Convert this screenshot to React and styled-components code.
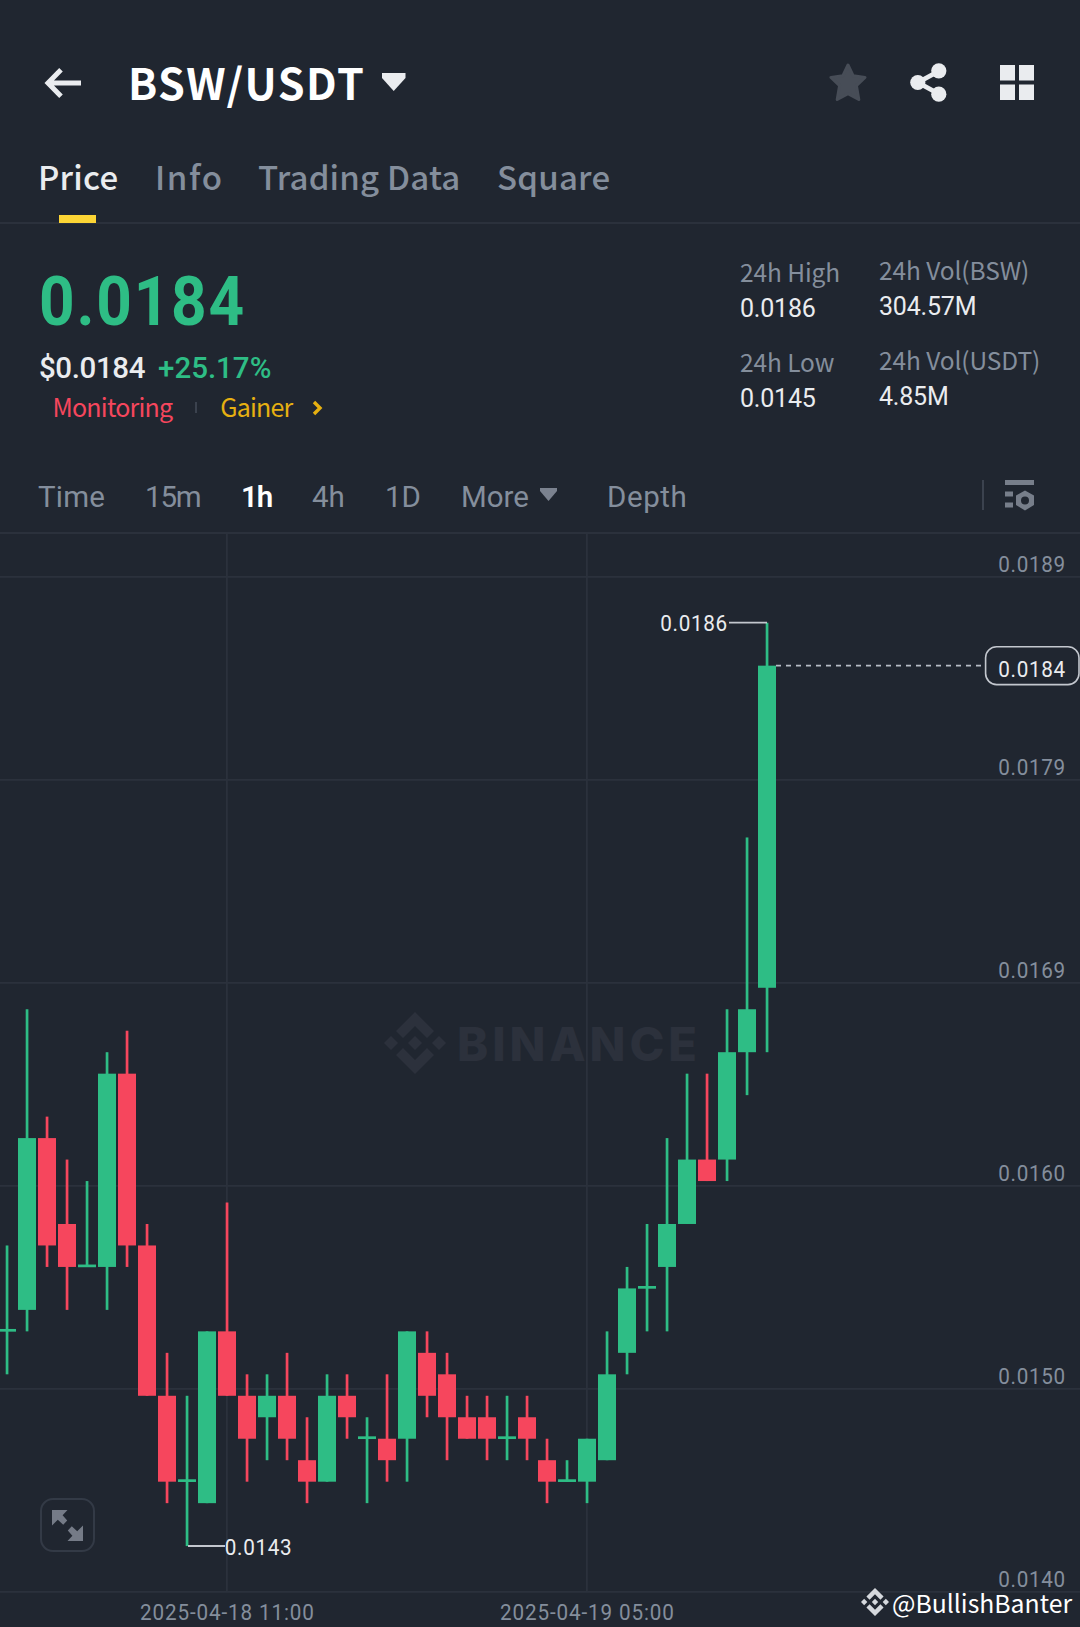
import styled, { createGlobalStyle } from "styled-components"

const tabs = [
    { name: "Price", width: 80, spacing: 0.2, active: true },
    { name: "Info", width: 66, spacing: 1.6 },
    { name: "Trading Data", width: 202, spacing: 0.2 },
    { name: "Square", width: 120, spacing: 0.2 },
]

const intervals = [
    { name: "Time", width: 107, spacing: 0.2 },
    { name: "15m", width: 96, spacing: -1.2 },
    { name: "1h", width: 71, spacing: -1, active: true },
    { name: "4h", width: 73 },
    { name: "1D", width: 76 },
    { name: "More", width: 146, menu: true },
    { name: "Depth", width: 90, spacing: 0.6 },
]

// [open, high, low, close] in ticks of 0.0001
const candles = [
    [153, 157, 151, 153], [154, 168, 153, 162], [162, 163, 156, 157], [158, 161, 154, 156],
    [156, 160, 156, 156], [156, 166, 154, 165], [165, 167, 156, 157], [157, 158, 150, 150],
    [150, 152, 145, 146], [146, 150, 143, 146], [145, 153, 145, 153], [153, 159, 150, 150],
    [150, 151, 146, 148], [149, 151, 147, 150], [150, 152, 147, 148], [147, 149, 145, 146],
    [146, 151, 146, 150], [150, 151, 148, 149], [148, 149, 145, 148], [148, 151, 146, 147],
    [148, 153, 146, 153], [152, 153, 149, 150], [151, 152, 147, 149], [149, 150, 148, 148],
    [149, 150, 147, 148], [148, 150, 147, 148], [149, 150, 147, 148], [147, 148, 145, 146],
    [146, 147, 146, 146], [146, 148, 145, 148], [147, 153, 147, 151], [152, 156, 151, 155],
    [155, 158, 153, 155], [156, 162, 153, 158], [158, 165, 158, 161], [161, 165, 160, 160],
    [161, 168, 160, 166], [166, 176, 164, 168], [169, 186, 166, 184],
]

const priceLines = [
    { label: "0.0189", y: 577 },
    { label: "0.0179", y: 780 },
    { label: "0.0169", y: 983 },
    { label: "0.0160", y: 1186 },
    { label: "0.0150", y: 1389 },
    { label: "0.0140", y: 1592 },
]

const dates = [
    { label: "2025-04-18 11:00", x: 227 },
    { label: "2025-04-19 05:00", x: 587 },
]

const priceY = (ticks) => 1546.1 - (ticks - 143) * 21.474

const Candle = ({ data, index }) => {
    const [open, high, low, close] = data
    const color = close >= open ? "#2ebd85" : "#f6465d"
    const x = 7 + index * 20
    const top = priceY(Math.max(open, close))
    const height = Math.abs(open - close) * 21.474
    return (
        <g fill={color}>
            <rect x={x - 1.3} y={priceY(high)} width="2.7" height={priceY(low) - priceY(high)} />
            {height === 0
                ? <rect x={x - 9} y={top - 2.4} width="18" height="2.7" />
                : <rect x={x - 9} y={top} width="18" height={height} />}
        </g>
    )
}

const BinanceMark = ({ size, color }) => (
    <svg width={size} height={size} viewBox="0 0 62 62" fill={color}>
        <path d="M31 0 50 19 43 26 31 14 19 26 12 19Z" />
        <path d="M31 62 50 43 43 36 31 48 19 36 12 43Z" />
        <path d="M7 24 14 31 7 38 0 31Z" />
        <path d="M55 24 62 31 55 38 48 31Z" />
        <path d="M31 24 38 31 31 38 24 31Z" />
    </svg>
)

const Chart = () => (
    <ChartSvg viewBox="0 534 1080 1093">
        {priceLines.map(line => (
            <rect key={line.label} x="0" y={line.y - 1} width="1080" height="1.8" fill="#2b313c" />
        ))}
        {dates.map(date => (
            <rect key={date.label} x={date.x - 1} y="534" width="1.8" height="1058" fill="#2b313c" />
        ))}

        <g transform="translate(384 1012)">
            <BinanceMark size={62} color="#2c313c" />
        </g>
        <Watermark x="457" y="1060.5" textLength="240">BINANCE</Watermark>

        {candles.map((c, i) => <Candle key={i} data={c} index={i} />)}

        <path d="M729 622.7H767M188 1546H225" stroke="#c3c7ce" strokeWidth="1.8" />
        <path d="M776 665.7H982" stroke="#b7bdc6" strokeWidth="1.8" strokeDasharray="5 5" />
        <Mark transform="translate(660.3 631) scale(0.94 1)" textLength="71">0.0186</Mark>
        <Mark transform="translate(224.8 1555) scale(0.94 1)" textLength="71">0.0143</Mark>

        {priceLines.map(line => (
            <AxisText key={line.label} transform={`translate(998.3 ${line.y - 5.5}) scale(0.94 1)`} textLength="71">{line.label}</AxisText>
        ))}
        {dates.map(date => (
            <AxisText key={date.label} transform={`translate(${date.x - 87} 1620.3) scale(0.94 1)`} textLength="185">{date.label}</AxisText>
        ))}

        <rect x="985.6" y="646.8" width="93.4" height="37.8" rx="11" fill="#202630" stroke="#c3c7ce" strokeWidth="1.6" />
        <Mark transform="translate(998.3 677) scale(0.94 1)" textLength="71">0.0184</Mark>
    </ChartSvg>
)

const App = () => {
    return (
        <Container>
            <GlobalStyle />

            <Header>
                <Back width="38" height="30" viewBox="0 0 38 30" fill="none" stroke="#eaecef" strokeWidth="5">
                    <path d="M37 15H4M17 1.8 4 15 17 28.2" />
                </Back>
                <Pair>BSW/USDT</Pair>
                <PairCaret width="24" height="18" viewBox="0 0 24 18" fill="#eaecef">
                    <path d="M0 0H23.5V5L11.7 18 0 5Z" />
                </PairCaret>
                <Actions>
                    <svg width="38" height="39" viewBox="0 0 38 39" fill="#474d57" stroke="#474d57" strokeWidth="3" strokeLinejoin="round">
                        <path d="M19 2 24.2 12.8 36 14.4 27.4 22.6 29.8 36.5 19 30.6 8.2 36.5 10.6 22.6 2 14.4 13.8 12.8Z" />
                    </svg>
                    <svg width="37" height="39" viewBox="0 0 37 39" fill="#eaecef">
                        <path d="M29 8 8 19.5 29 31" fill="none" stroke="#eaecef" strokeWidth="4.8" />
                        <circle cx="28.8" cy="7.8" r="7.6" />
                        <circle cx="7.8" cy="19.5" r="7.6" />
                        <circle cx="28.8" cy="31.2" r="7.6" />
                    </svg>
                    <svg width="34" height="35" viewBox="0 0 34 35" fill="#eaecef">
                        <path d="M0 0H15V15.5H0ZM19 0H34V15.5H19ZM0 19.5H15V35H0ZM19 19.5H34V35H19Z" />
                    </svg>
                </Actions>
            </Header>

            <Tabs>
                {tabs.map(tab => (
                    <Tab key={tab.name} w={tab.width} gap={tab.spacing} active={tab.active ? 1 : 0}>{tab.name}</Tab>
                ))}
            </Tabs>

            <Summary>
                <Left>
                    <Price>0.0184</Price>
                    <Change>
                        <Fiat>$0.0184</Fiat>
                        <Percent>+25.17%</Percent>
                    </Change>
                    <Tags>
                        <Tag color="#f6465d">Monitoring</Tag>
                        <TagDivider />
                        <Tag color="#e6b011">Gainer</Tag>
                        <svg width="12" height="16" viewBox="0 0 12 16" fill="none" stroke="#e6b011" strokeWidth="3.4">
                            <path d="M2 2 8 8 2 14" />
                        </svg>
                    </Tags>
                </Left>
                <Right>
                    <StatColumn w={139}>
                        <Stat><Label>24h High</Label><Value>0.0186</Value></Stat>
                        <Stat><Label>24h Low</Label><Value>0.0145</Value></Stat>
                    </StatColumn>
                    <StatColumn w={201} raised>
                        <Stat><Label>24h Vol(BSW)</Label><Value>304.57M</Value></Stat>
                        <Stat><Label>24h Vol(USDT)</Label><Value>4.85M</Value></Stat>
                    </StatColumn>
                </Right>
            </Summary>

            <Toolbar>
                {intervals.map(item => (
                    <Interval key={item.name} w={item.width} gap={item.spacing} active={item.active ? 1 : 0}>
                        {item.name}
                        {item.menu && (
                            <svg width="17" height="13" viewBox="0 0 17 13" fill="#7b828f">
                                <path d="M0 0H17V3L8.5 13 0 3Z" />
                            </svg>
                        )}
                    </Interval>
                ))}
                <Settings>
                    <svg width="30" height="31" viewBox="0 0 30 31" fill="#777e8a">
                        <path d="M0 0H29V5H0ZM0 11.5H8V16.5H0ZM0 22.5H8V27.5H0Z" />
                        <path fillRule="evenodd" d="M20 10.5 29 15.6V25L20 30.5 11 25V15.6ZM20 16.5A4 4 0 1 0 20 24.5 4 4 0 1 0 20 16.5Z" />
                    </svg>
                </Settings>
            </Toolbar>

            <ChartArea>
                <Chart />
                <Expand>
                    <svg width="31" height="31" viewBox="0 0 31 31" fill="#757b87">
                        <path d="M0 0H15.5L10.6 5.3 15.2 10.6 11.2 14.8 5.8 9.8 0 15.5Z" />
                        <path d="M31 31H15.5L20.4 25.7 15.8 20.4 19.8 16.2 25.2 21.2 31 15.5Z" />
                    </svg>
                </Expand>
                <Author>
                    <BinanceMark size={28} color="#d5d8dd" />
                    @BullishBanter
                </Author>
            </ChartArea>
        </Container>
    )
}

// ///// Style //////
const GlobalStyle = createGlobalStyle`
    * { box-sizing: border-box; }
    body {
        margin: 0;
        background-color: #202630;
    }
`
const Container = styled.div`
    width: 1080px;
    height: 1627px;
    overflow: hidden;
    display: flex;
    flex-direction: column;
    background-color: #202630;
    color: #eaecef;
    font-family: "Noto Sans CJK SC", "Noto Sans", sans-serif;
    white-space: nowrap;
`
// Header
const Header = styled.div`
    height: 118px;
    padding: 47px 46px 0 44px;
    display: flex;
    align-items: center;
`
const Back = styled.svg`
    flex: none;
`
const Pair = styled.h1`
    margin: -4px 0 0;
    width: 300px;
    padding-left: 46px;
    font-size: 43px;
    font-weight: 600;
    line-height: 60px;
    letter-spacing: 1.5px;
    color: #fff;
`
const PairCaret = styled.svg`
    flex: none;
    margin-bottom: 1px;
`
const Actions = styled.div`
    margin-left: auto;
    display: flex;
    align-items: center;
    gap: 43px;

    svg:last-child {
        margin-left: 10px;
    }
`
// Tabs
const Tabs = styled.div`
    height: 106px;
    padding: 38px 0 0 38px;
    display: flex;
    gap: 37px;
    border-bottom: 2px solid #2b313c;
`
const Tab = styled.div`
    width: ${props => props.w}px;
    display: flex;
    flex-direction: column;
    font-size: 33px;
    font-weight: 500;
    line-height: 40px;
    letter-spacing: ${props => props.gap}px;
    color: ${props => props.active ? "#eaecef" : "#848e9c"};

    &::after {
        content: "";
        width: 37px;
        height: 8px;
        margin: auto auto -1px 21px;
        background-color: ${props => props.active ? "#fcd535" : "transparent"};
    }
`
// Summary
const Summary = styled.div`
    height: 236px;
    padding-left: 39px;
    display: flex;
    justify-content: space-between;
`
const Left = styled.div`
    padding-top: 43px;
`
const Price = styled.div`
    font-family: Roboto, sans-serif;
    font-size: 69px;
    font-weight: 700;
    line-height: 70px;
    letter-spacing: 2px;
    color: #2ebd85;
    transform: scaleX(0.9);
    transform-origin: left;
`
const Change = styled.div`
    margin-top: 13px;
    display: flex;
    gap: 13px;
    font-family: Roboto, sans-serif;
    font-size: 29.5px;
    font-weight: 500;
    line-height: 36px;
`
const Fiat = styled.span`
    letter-spacing: -0.4px;
`
const Percent = styled.span`
    letter-spacing: 0;
    color: #2ebd85;
`
const Tags = styled.div`
    margin-top: 5px;
    padding-left: 13.5px;
    display: flex;
    align-items: center;
    line-height: 30px;
`
const Tag = styled.span`
    font-size: 25px;
    letter-spacing: -0.8px;
    color: ${props => props.color};

    & + svg {
        margin: 3px 0 0 20px;
    }
`
const TagDivider = styled.span`
    width: 2px;
    height: 11px;
    margin: 2px 23px 0 23px;
    background-color: #3b424e;
`
const Right = styled.div`
    display: flex;
`
const StatColumn = styled.div`
    width: ${props => props.w}px;
    padding-top: ${props => props.raised ? 28 : 30}px;
    display: flex;
    flex-direction: column;
    gap: 18px;
`
const Stat = styled.div`
    display: flex;
    flex-direction: column;
    gap: 2px;
`
const Label = styled.span`
    font-size: 24.5px;
    line-height: 35px;
    letter-spacing: -0.1px;
    color: #848e9c;
`
const Value = styled.span`
    font-family: Roboto, sans-serif;
    font-size: 25px;
    line-height: 35px;
    letter-spacing: -0.2px;
`
// Intervals
const Toolbar = styled.div`
    height: 74px;
    padding: 2px 45px 0 38px;
    display: flex;
    align-items: center;
    border-bottom: 2px solid #2b313c;
    font-family: Roboto, sans-serif;
    font-size: 29.5px;
    line-height: 40px;
`
const Interval = styled.div`
    width: ${props => props.w}px;
    display: flex;
    align-items: center;
    gap: 11px;
    font-weight: ${props => props.active ? 600 : 400};
    letter-spacing: ${props => props.gap || 0}px;
    color: ${props => props.active ? "#fff" : "#848e9c"};

    svg {
        margin-bottom: 5px;
    }
`
const Settings = styled.div`
    height: 30px;
    margin: 0 0 4px auto;
    padding-left: 21px;
    border-left: 2px solid #3b424e;
`
// Chart
const ChartArea = styled.div`
    position: relative;
    height: 1093px;
`
const ChartSvg = styled.svg`
    display: block;
    width: 1080px;
    height: 1093px;
`
const AxisText = styled.text`
    font-family: Roboto, sans-serif;
    font-size: 22px;
    fill: #848e9c;
`
const Mark = styled(AxisText)`
    fill: #eaecef;
`
const Watermark = styled.text`
    font-family: Inter, sans-serif;
    font-size: 47px;
    font-weight: 800;
    fill: #2c313c;
`
const Expand = styled.div`
    position: absolute;
    left: 40px;
    top: 964px;
    width: 55px;
    height: 54px;
    display: flex;
    align-items: center;
    justify-content: center;
    border: 2px solid #333a46;
    border-radius: 13px;
`
const Author = styled.div`
    position: absolute;
    right: 8px;
    bottom: 11px;
    display: flex;
    align-items: center;
    gap: 3px;
    font-size: 24.8px;
    line-height: 26px;
    color: #fff;
`

export default App
